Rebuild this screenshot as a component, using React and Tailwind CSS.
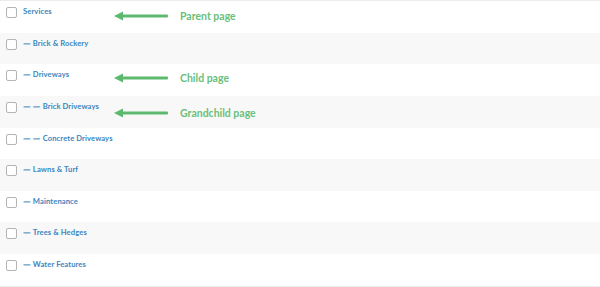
const pages = [
  { title: 'Services', depth: 0 },
  { title: 'Brick & Rockery', depth: 1 },
  { title: 'Driveways', depth: 1 },
  { title: 'Brick Driveways', depth: 2 },
  { title: 'Concrete Driveways', depth: 2 },
  { title: 'Lawns & Turf', depth: 1 },
  { title: 'Maintenance', depth: 1 },
  { title: 'Trees & Hedges', depth: 1 },
  { title: 'Water Features', depth: 1 },
];

const notes = [
  { label: 'Parent page', top: 'top-[10px]' },
  { label: 'Child page', top: 'top-[72px]' },
  { label: 'Grandchild page', top: 'top-[107px]' },
];

function Arrow() {
  return (
    <svg width="56" height="10" viewBox="0 0 56 10">
      <path d="M0 5 L9 0.5 L9 9.5 Z" fill="#5cb96e" />
      <rect x="8" y="3.6" width="46" height="2.8" rx="1" fill="#5cb96e" />
    </svg>
  );
}

export default function App() {
  return (
    <div className="relative w-[600px] h-[287px] overflow-hidden bg-white font-['Lato',sans-serif]">
      <div className="border-t border-b border-[#ececec]">
        {pages.map((p, i) => (
          <div
            key={p.title}
            className={`flex items-start h-[31.65px] pl-[6px] pt-[5px] ${i % 2 === 1 ? 'bg-[#f8f8f8]' : 'bg-white'}`}
          >
            <span className="mt-[1px] w-[11px] h-[11px] rounded-[2px] border border-[#b4b4b4] bg-white shrink-0" />
            <span className="ml-[6px] text-[7.6px] leading-[10px] font-bold text-[#3a86bf] tracking-[0.1px]">
              {p.depth > 0 && (
                <span className="font-['DejaVu_Sans',sans-serif] font-bold tracking-[-0.2px]">{'— '.repeat(p.depth)}</span>
              )}
              {p.title}
            </span>
          </div>
        ))}
      </div>

      {/* annotations */}
      {notes.map((n) => (
        <div key={n.label} className={`absolute left-[114px] ${n.top} flex items-center gap-[10px]`}>
          <Arrow />
          <span className="text-[10.5px] leading-[12px] font-bold text-[#69c07a]">{n.label}</span>
        </div>
      ))}
    </div>
  );
}
